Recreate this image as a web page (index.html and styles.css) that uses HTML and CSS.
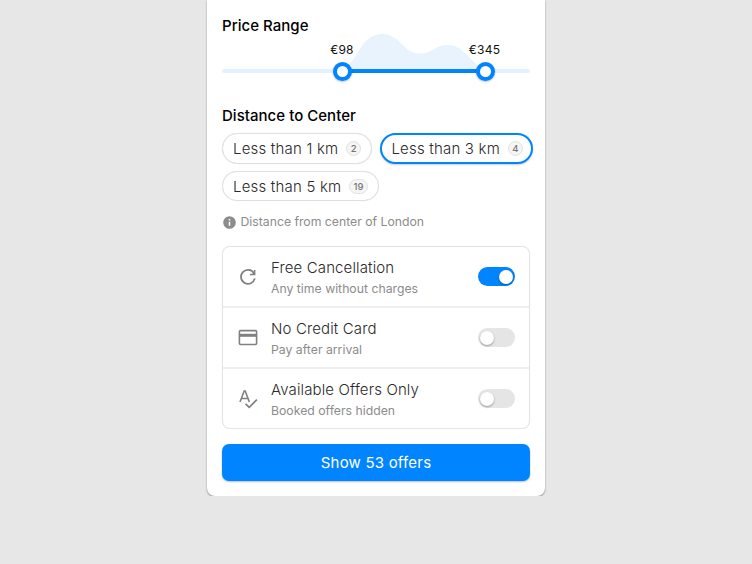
FILE: index.html
```
<!doctype html>
<html lang="en">
<head>
	<meta charset="UTF-8">
	<title>Filters</title>
	<link rel="stylesheet" href="styles.css">
</head>
<body>
	<main class="panel">
		<section class="price">
			<h2 class="title">Price Range</h2>
			<div class="slider">
				<svg class="slider__chart" width="308" height="50" viewBox="0 0 308 50">
					<path fill="#e8f3fe" d="M118 36 C126 34 133 22 140 11 C147 1 154 -1 161 -1 C168 -1 174 3 181 10 C187 17 192 18.500 199 18.500 C211 18.500 212 10 226 10 C240 10 246 23 259 33 L263 36 Z"/>
				</svg>
				<div class="slider__track"></div>
				<div class="slider__range"></div>
				<div class="slider__knob slider__knob--min"></div>
				<div class="slider__knob slider__knob--max"></div>
				<span class="slider__label slider__label--min">€98</span>
				<span class="slider__label slider__label--max">€345</span>
			</div>
		</section>

		<section class="distance">
			<h2 class="title">Distance to Center</h2>
			<div class="chips">
				<button class="chip"><span class="chip__text">Less than 1 km</span><span class="chip__count">2</span></button>
				<button class="chip chip--active"><span class="chip__text">Less than 3 km</span><span class="chip__count">4</span></button>
				<button class="chip"><span class="chip__text">Less than 5 km</span><span class="chip__count">19</span></button>
			</div>
			<p class="note">
				<svg width="13" height="13" viewBox="0 0 13 13">
					<circle cx="6.500" cy="6.500" r="6.300" fill="#8c8c8c"/>
					<path d="M6.500 5.700v4M6.500 3v1.500" stroke="#fff" stroke-width="1.500"/>
				</svg>
				<span>Distance from center of London</span>
			</p>
		</section>

		<ul class="options">
			<li class="option">
				<svg class="option__icon" width="20" height="20" viewBox="0 0 20 20">
					<path d="M15.900 6.100A7 7 0 1 0 16.800 11.400" fill="none" stroke="#808080" stroke-width="1.700"/>
					<path d="M17.400 2.900v5.400h-5.400v-1.500h2.300l1.600-1.600v-2.300z" fill="#808080"/>
				</svg>
				<div class="option__body">
					<div class="option__name">Free Cancellation</div>
					<div class="option__hint">Any time without charges</div>
				</div>
				<button class="switch switch--on" aria-label="Free Cancellation"></button>
			</li>
			<li class="option">
				<svg class="option__icon" width="20" height="20" viewBox="0 0 20 20">
					<rect x="1.400" y="2.600" width="17.200" height="13.900" rx="1.200" fill="none" stroke="#808080" stroke-width="1.600"/>
					<path d="M1 7.300h18" stroke="#808080" stroke-width="3"/>
				</svg>
				<div class="option__body">
					<div class="option__name">No Credit Card</div>
					<div class="option__hint">Pay after arrival</div>
				</div>
				<button class="switch" aria-label="No Credit Card"></button>
			</li>
			<li class="option">
				<svg class="option__icon" width="20" height="20" viewBox="0 0 20 20">
					<path d="M2 13L6.200 2h1L11.400 13M3.500 9.500h6.400" fill="none" stroke="#808080" stroke-width="1.600"/>
					<path d="M7.600 14.800l3.600 3.600 7.700-7.800" fill="none" stroke="#808080" stroke-width="1.700"/>
				</svg>
				<div class="option__body">
					<div class="option__name">Available Offers Only</div>
					<div class="option__hint">Booked offers hidden</div>
				</div>
				<button class="switch" aria-label="Available Offers Only"></button>
			</li>
		</ul>

		<button class="submit">Show 53 offers</button>
	</main>

<script>
document.querySelectorAll('.switch').forEach(s => {
  s.addEventListener('click', () => s.classList.toggle('switch--on'))
})
</script>
</body>
</html>
```

FILE: styles.css
```
* {
  box-sizing: border-box;
}

body {
  background-color: #e7e7e7;
  font-family: Inter, "Liberation Sans", sans-serif;
  margin: 0;
}

button {
  font-family: inherit;
}

.panel {
  background-color: #fff;
  border-radius: 0 0 8px 8px;
  box-shadow: 0 1px 2px rgba(0, 0, 0, 0.4);
  height: 496px;
  margin-left: 207px;
  padding: 15px 15px 0;
  width: 338.3px;
}

.title {
  color: #000;
  font-size: 15px;
  font-weight: 500;
  letter-spacing: 0.03px;
  line-height: 20px;
  margin: 0;
  padding-top: 1px;
}

.slider {
  height: 50px;
  margin-top: -1px;
  position: relative;
}

.slider__chart {
  display: block;
  overflow: visible;
}

.slider__track,
.slider__range {
  border-radius: 2px;
  height: 4px;
  left: 0;
  position: absolute;
  top: 34px;
}

.slider__track {
  background-color: #e3f1ff;
  width: 308px;
}

.slider__range {
  background-color: #0084ff;
  left: 120px;
  width: 143px;
}

.slider__knob {
  background-color: #fff;
  border: 4px solid #0084ff;
  border-radius: 50%;
  box-shadow: 0 1px 2px rgba(0, 0, 0, 0.25);
  height: 19px;
  position: absolute;
  top: 27px;
  width: 19px;
}

.slider__knob--min {
  left: 110.5px;
}

.slider__knob--max {
  left: 253.5px;
}

.slider__label {
  color: #111;
  font-size: 12px;
  letter-spacing: 0.2px;
  line-height: 16px;
  position: absolute;
  top: 7px;
  transform: translateX(-50%);
}

.slider__label--min {
  left: 120px;
}

.slider__label--max {
  left: 262.5px;
}

.distance {
  margin-top: 20px;
}

.chips {
  display: flex;
  flex-wrap: wrap;
  gap: 7px 8px;
  margin: 7.3px -8px 0 0;
}

.chip {
  align-items: center;
  background-color: #fff;
  border: 1px solid #e0e0e0;
  border-radius: 16px;
  box-shadow: 0 0 1px rgba(0, 0, 0, 0.12);
  color: #2a2a2a;
  display: flex;
  font-size: 15px;
  font-weight: 300;
  gap: 8px;
  height: 30.5px;
  letter-spacing: 0.2px;
  padding: 0 10px;
}

.chip--active {
  border: 2px solid #0084ff;
  box-shadow: 0 1px 2px rgba(0, 0, 0, 0.2);
  padding: 0 8.5px 0 9px;
}

.chip__count {
  background-color: #f5f5f5;
  border: 1px solid #e2e2e2;
  border-radius: 8px;
  color: #777;
  font-size: 9.5px;
  font-weight: 500;
  line-height: 13px;
  min-width: 15px;
  padding: 0 3px;
  text-align: center;
}

.note {
  align-items: center;
  color: #8c8c8c;
  display: flex;
  font-size: 12.25px;
  gap: 4.5px;
  letter-spacing: -0.01px;
  line-height: 16px;
  margin: 13px 0 0 1px;
}

.options {
  border: 1px solid #e4e4e4;
  border-radius: 8px;
  box-shadow: 0 0 1px rgba(0, 0, 0, 0.15);
  list-style: none;
  margin: 16px 0 0;
  padding: 0;
  width: 308px;
}

.option {
  align-items: center;
  display: flex;
  height: 59px;
  padding: 0 14px 0 15px;
}

.option + .option {
  border-top: 2px solid #efefef;
  height: 61px;
}

.option__icon {
  flex: none;
}

.option__body {
  flex: 1;
  margin-left: 13px;
  padding-top: 1px;
}

.option__name {
  color: #2a2a2a;
  font-size: 15px;
  font-weight: 300;
  letter-spacing: 0.13px;
  line-height: 22px;
}

.option__hint {
  color: #8c8c8c;
  font-size: 12.25px;
  line-height: 19px;
}

.switch {
  background-color: #e5e5e5;
  border: 0;
  border-radius: 10px;
  height: 19px;
  padding: 2px 2.5px;
  width: 37.5px;
}

.switch::before {
  background-color: #fff;
  border-radius: 50%;
  box-shadow: 0 1px 2px rgba(0, 0, 0, 0.35);
  content: "";
  display: block;
  height: 14px;
  width: 14px;
}

.switch--on {
  background-color: #0084ff;
}

.switch--on::before {
  margin-left: 19px;
}

.submit {
  background-color: #0084ff;
  border: 0;
  border-radius: 7px;
  box-shadow: 0 1px 2px rgba(0, 0, 0, 0.25);
  color: #fff;
  display: block;
  font-size: 15px;
  font-weight: 400;
  height: 37px;
  letter-spacing: 0.2px;
  margin-top: 15px;
  width: 308px;
}
```
